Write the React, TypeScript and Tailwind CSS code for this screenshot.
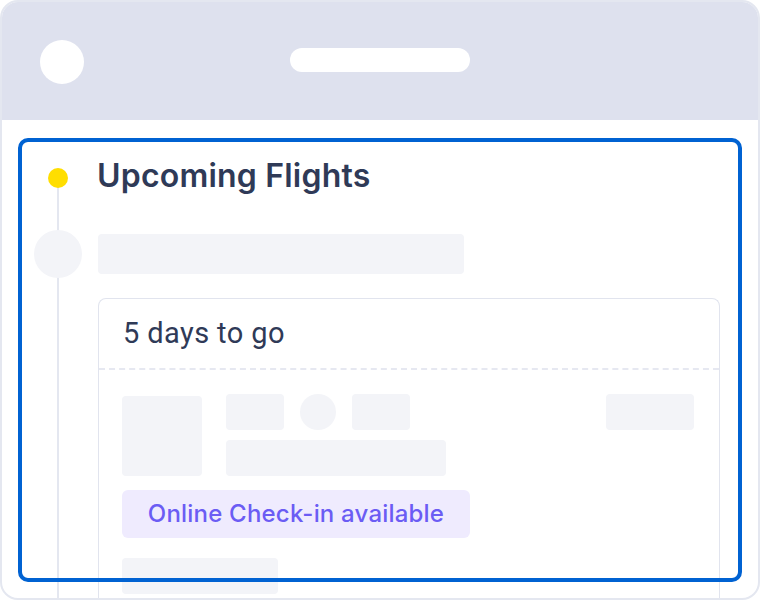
import React from 'react';

const Skel: React.FC<{ className?: string }> = ({ className = '' }) => (
  <div className={`bg-[#f3f4f8] rounded ${className}`} />
);

export default function App() {
  return (
    <div className="w-[760px] h-[600px] bg-white">
      <div className="relative w-[760px] h-[600px] rounded-[18px] border-2 border-[#e4e7f0] overflow-hidden bg-white font-['Inter',sans-serif]">
        {/* top bar */}
        <div className="h-[118px] bg-[#dee1ee] flex items-center pl-[38px] pr-[38px]">
          <div className="w-[44px] h-[44px] rounded-full bg-white mt-[2px]" />
          <div className="ml-[206px] w-[180px] h-[24px] rounded-full bg-white -mt-[2px]" />
        </div>

        {/* body */}
        <div className="relative pl-[32px] pr-[38px]">
          {/* timeline line */}
          <div className="absolute left-[55px] top-[58px] w-[2px] h-[480px] bg-[#e4e7f0]" />

          <div className="relative flex items-start gap-4 pt-[36px]">
            <div className="w-[48px] flex justify-center pt-[12px]">
              <div className="w-[20px] h-[20px] rounded-full bg-[#ffde00]" />
            </div>
            <h1 className="text-[32px] leading-[37px] font-semibold text-[#2f3a57] -ml-[1px] pt-[1px] -mb-[2px] tracking-[0.2px]">
              Upcoming Flights
            </h1>
          </div>

          <div className="relative flex items-center gap-4 mt-[38px]">
            <div className="w-[48px] h-[48px] rounded-full bg-[#f3f4f8]" />
            <Skel className="w-[366px] h-[40px]" />
          </div>

          <div className="relative flex items-start gap-4 mt-[20px]">
            <div className="w-[48px] shrink-0" />
            <div className="flex-1 rounded-t-[8px] border border-b-0 border-[#e1e4ee] bg-white h-[310px]">
              <div className="h-[71px] flex items-center px-[24px] border-b-2 border-dashed border-[#e6e8f1]">
                <span className="font-['Roboto',sans-serif] text-[29px] text-[#2f3a57] tracking-[0.4px] pt-[1px]">
                  5 days to go
                </span>
              </div>
              <div className="pl-[23px] pr-[25px] pt-[24px]">
                <div className="flex items-start gap-6">
                  <Skel className="w-[80px] h-[80px] mt-[2px] shrink-0" />
                  <div className="flex-1">
                    <div className="flex items-center gap-4">
                      <Skel className="w-[58px] h-[36px]" />
                      <div className="w-[36px] h-[36px] rounded-full bg-[#f3f4f8]" />
                      <Skel className="w-[58px] h-[36px]" />
                      <Skel className="w-[88px] h-[36px] ml-auto" />
                    </div>
                    <Skel className="w-[220px] h-[36px] mt-[10px]" />
                  </div>
                </div>
                <div className="mt-[14px] w-[348px] h-[48px] rounded-[6px] bg-[#efebfe] flex items-center justify-center">
                  <span className="text-[24px] font-medium text-[#6b5cf4] tracking-[0.2px]">
                    Online Check-in available
                  </span>
                </div>
                <Skel className="w-[156px] h-[36px] mt-[20px]" />
              </div>
            </div>
          </div>
        </div>

        {/* highlight frame */}
        <div className="absolute left-[16px] top-[136px] w-[724px] h-[444px] rounded-[10px] border-4 border-[#0062d2] pointer-events-none" />
      </div>
    </div>
  );
}
